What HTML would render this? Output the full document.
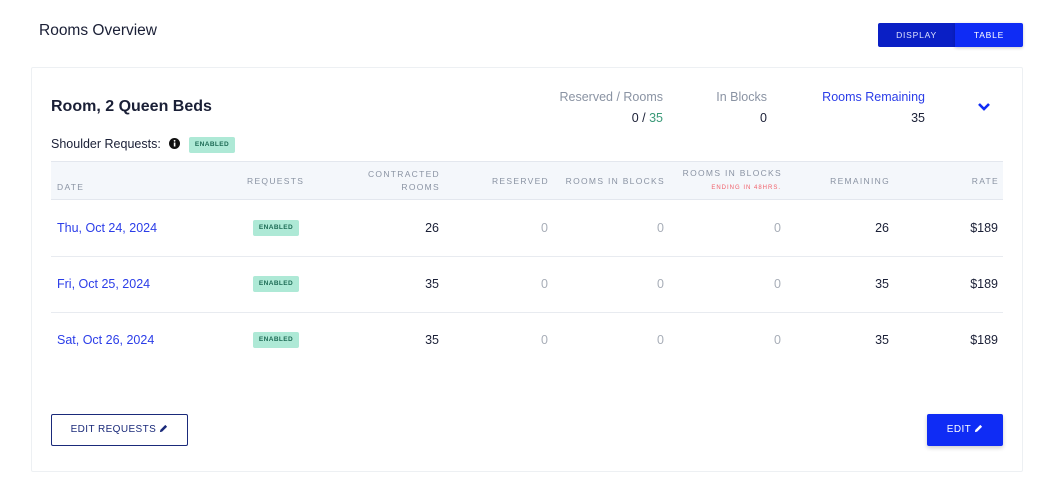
<!DOCTYPE html>
<html><head><style>
*{margin:0;padding:0;box-sizing:border-box}
body{width:1044px;height:488px;background:#fff;font-family:"Liberation Sans",sans-serif;color:#1a1f36;position:relative;overflow:hidden}
.a{position:absolute;white-space:nowrap}
.r{text-align:right}
.th{font-size:8.5px;letter-spacing:1.3px;color:#8a93a3}
.badge{position:absolute;background:#aee9d6;color:#1d6b55;font-size:6.5px;font-weight:bold;letter-spacing:.4px;border-radius:2px;text-align:center}
.cell{font-size:12.5px}
.g{color:#a8aeb8}
.d{color:#2b3de8;font-size:12.5px}
</style></head><body>
<div class="a" style="left:39px;top:22px;font-size:15.5px;color:#1a1f36">Rooms Overview</div>
<div class="a" style="left:878px;top:23px;width:77px;height:24px;background:#0a1fc5;border-radius:2px 0 0 2px;color:#dfe3ff;font-size:8.5px;letter-spacing:.8px;line-height:24px;text-align:center">DISPLAY</div>
<div class="a" style="left:955px;top:23px;width:68px;height:24px;background:#0f2cf5;border-radius:0 2px 2px 0;color:#fff;font-size:8.5px;letter-spacing:.8px;line-height:24px;text-align:center;box-shadow:0 1px 3px rgba(0,0,0,.2)">TABLE</div>
<div class="a" style="left:31px;top:67px;width:992px;height:405px;border:1px solid #edf0f3;border-radius:2px"></div>
<div class="a" style="left:51px;top:98px;font-size:16px;font-weight:bold">Room, 2 Queen Beds</div>
<div class="a r" style="left:520px;width:143px;top:90px;font-size:12.5px;color:#8a93a3">Reserved / Rooms</div>
<div class="a r" style="left:520px;width:143px;top:111px;font-size:12.5px">0 / <span style="color:#3a9a78">35</span></div>
<div class="a r" style="left:680px;width:87px;top:90px;font-size:12.5px;color:#8a93a3">In Blocks</div>
<div class="a r" style="left:680px;width:87px;top:111px;font-size:12.5px">0</div>
<div class="a r" style="left:800px;width:125px;top:90px;font-size:12.5px;color:#2b3de8">Rooms Remaining</div>
<div class="a r" style="left:800px;width:125px;top:111px;font-size:12.5px">35</div>
<svg class="a" style="left:977px;top:102px" width="14" height="10" viewBox="0 0 14 10"><path d="M2 2l5 5 5-5" fill="none" stroke="#0f2cf5" stroke-width="2.6"/></svg>
<div class="a" style="left:51px;top:137px;font-size:12.5px">Shoulder Requests:</div>
<svg class="a" style="left:169px;top:138px" width="11" height="11" viewBox="0 0 11 11"><circle cx="5.5" cy="5.5" r="5.5" fill="#111"/><rect x="4.8" y="4.5" width="1.6" height="4" fill="#fff"/><circle cx="5.6" cy="2.8" r=".9" fill="#fff"/></svg>
<div class="badge" style="left:189px;top:137px;width:46px;height:16px;line-height:16px">ENABLED</div>
<div class="a" style="left:51px;top:161px;width:952px;height:39px;background:#f4f7fb;border-top:1px solid #e3e7ee;border-bottom:1px solid #e3e7ee"></div>
<div class="a th" style="left:57px;top:182px">DATE</div>
<div class="a th" style="left:247px;top:176px">REQUESTS</div>
<div class="a th r" style="left:330px;width:110px;top:168px;line-height:13px">CONTRACTED<br>ROOMS</div>
<div class="a th r" style="left:440px;width:109px;top:176px">RESERVED</div>
<div class="a th r" style="left:540px;width:125px;top:176px">ROOMS IN BLOCKS</div>
<div class="a th r" style="left:660px;width:122px;top:168px">ROOMS IN BLOCKS</div>
<div class="a r" style="left:660px;width:121px;top:185px;font-size:6px;letter-spacing:1px;color:#f0606a">ENDING IN 48HRS.</div>
<div class="a th r" style="left:780px;width:110px;top:176px">REMAINING</div>
<div class="a th r" style="left:940px;width:59px;top:176px">RATE</div>

<div class="a" style="left:51px;top:256px;width:952px;height:1px;background:#e8ebf0"></div>
<div class="a" style="left:51px;top:312px;width:952px;height:1px;background:#e8ebf0"></div>

<div class="a d" style="left:57px;top:221px">Thu, Oct 24, 2024</div>
<div class="badge" style="left:253px;top:220px;width:46px;height:16px;line-height:16px">ENABLED</div>
<div class="a cell r" style="left:380px;width:59px;top:221px">26</div>
<div class="a cell r g" style="left:490px;width:58px;top:221px">0</div>
<div class="a cell r g" style="left:600px;width:64px;top:221px">0</div>
<div class="a cell r g" style="left:720px;width:61px;top:221px">0</div>
<div class="a cell r" style="left:830px;width:59px;top:221px">26</div>
<div class="a cell r" style="left:940px;width:58px;top:221px">$189</div>

<div class="a d" style="left:57px;top:277px">Fri, Oct 25, 2024</div>
<div class="badge" style="left:253px;top:276px;width:46px;height:16px;line-height:16px">ENABLED</div>
<div class="a cell r" style="left:380px;width:59px;top:277px">35</div>
<div class="a cell r g" style="left:490px;width:58px;top:277px">0</div>
<div class="a cell r g" style="left:600px;width:64px;top:277px">0</div>
<div class="a cell r g" style="left:720px;width:61px;top:277px">0</div>
<div class="a cell r" style="left:830px;width:59px;top:277px">35</div>
<div class="a cell r" style="left:940px;width:58px;top:277px">$189</div>

<div class="a d" style="left:57px;top:333px">Sat, Oct 26, 2024</div>
<div class="badge" style="left:253px;top:332px;width:46px;height:16px;line-height:16px">ENABLED</div>
<div class="a cell r" style="left:380px;width:59px;top:333px">35</div>
<div class="a cell r g" style="left:490px;width:58px;top:333px">0</div>
<div class="a cell r g" style="left:600px;width:64px;top:333px">0</div>
<div class="a cell r g" style="left:720px;width:61px;top:333px">0</div>
<div class="a cell r" style="left:830px;width:59px;top:333px">35</div>
<div class="a cell r" style="left:940px;width:58px;top:333px">$189</div>

<div class="a" style="left:51px;top:414px;width:137px;height:32px;border:1px solid #1a2a7a;border-radius:2px;color:#1a2a7a;font-size:10px;letter-spacing:.4px;line-height:30px;text-align:center">EDIT REQUESTS <svg width="9" height="9" viewBox="0 0 10 10" style="vertical-align:-1px"><path d="M1 9l.5-2.5L7 1l2 2-5.5 5.5z" fill="#1a2a7a"/></svg></div>
<div class="a" style="left:927px;top:414px;width:76px;height:32px;background:#0f2cf5;border-radius:2px;color:#fff;font-size:10px;letter-spacing:.4px;line-height:32px;text-align:center;box-shadow:0 2px 4px rgba(0,0,0,.2)">EDIT <svg width="9" height="9" viewBox="0 0 10 10" style="vertical-align:-1px"><path d="M1 9l.5-2.5L7 1l2 2-5.5 5.5z" fill="#fff"/></svg></div>
</body></html>
